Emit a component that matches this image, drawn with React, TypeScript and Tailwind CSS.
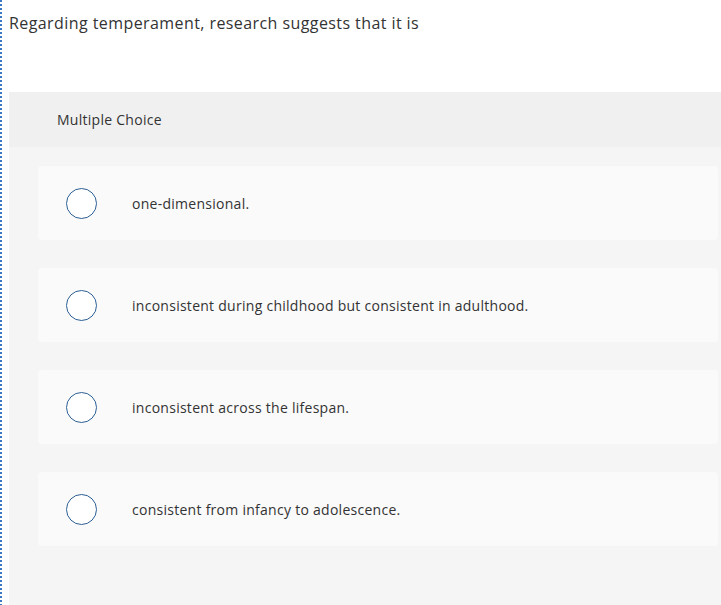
const options = [
  'one-dimensional.',
  'inconsistent during childhood but consistent in adulthood.',
  'inconsistent across the lifespan.',
  'consistent from infancy to adolescence.',
]

function Radio() {
  return (
    <span className="block w-[31px] h-[31px] shrink-0 rounded-full border border-[#2c5f95] bg-white" />
  )
}

export default function App() {
  return (
    <div
      className="min-h-[605px] border-l-2 border-dotted border-[#3a78c2] bg-white text-[#333] tracking-[0.27px]"
      style={{ fontFamily: '"Open Sans", sans-serif' }}
    >
      <p className="pl-[7px] pt-[12px] text-[16px] leading-[22px] tracking-[0.42px]">
        Regarding temperament, research suggests that it is
      </p>

      <div className="ml-[7px] mt-[58px] bg-[#f5f5f5] pb-[60px]">
        {/* Question type header */}
        <div className="h-[55px] flex items-center pl-[48px] bg-[#f0f0f0] text-[14px]">
          Multiple Choice
        </div>

        {/* Choices */}
        <div className="pt-[19px] pl-[29px] pr-[3px] flex flex-col gap-[28px]">
          {options.map((o) => (
            <div
              key={o}
              className="h-[74px] rounded-[4px] bg-[#fafafa] flex items-center pl-[28px]"
            >
              <Radio />
              <span className="ml-[35px] text-[14px]">{o}</span>
            </div>
          ))}
        </div>
      </div>
    </div>
  )
}
